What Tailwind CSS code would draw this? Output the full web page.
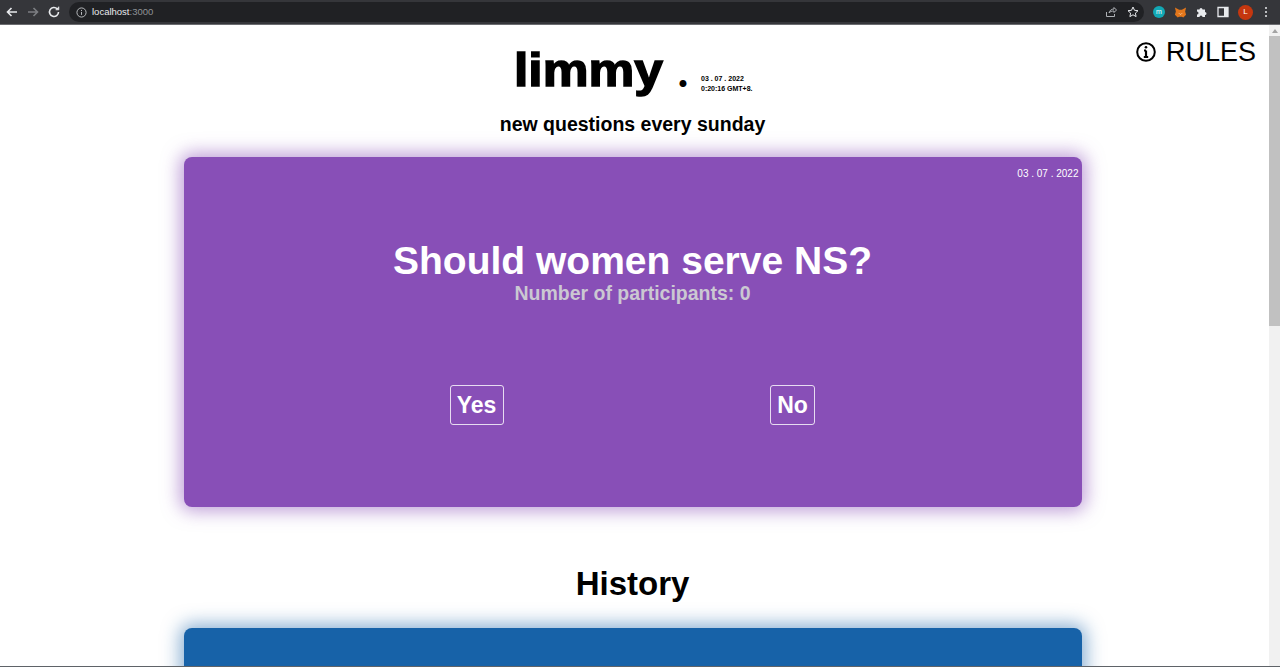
<!DOCTYPE html>
<html lang="en">
<head>
    <meta charset="UTF-8">
    <meta name="viewport" content="width=device-width, initial-scale=1.0">
    <title>limmy</title>
    <script src="https://cdn.jsdelivr.net/npm/@tailwindcss/browser@4"></script>
</head>
<body class="h-[667px] overflow-hidden bg-white font-['Liberation_Sans',Arial,sans-serif] text-black">

    <!-- browser toolbar -->
    <div class="flex h-[25px] items-center border-b border-[#6b6c70] bg-[#35363a] pl-[5px] pr-[13px]">
        <svg class="h-[14px] w-[14px]" viewBox="0 0 14 14" fill="none" stroke="#e8eaed" stroke-width="1.6"><path d="M12 7H2.5M6.5 3 2.5 7l4 4"/></svg>
        <svg class="ml-[7px] h-[14px] w-[14px]" viewBox="0 0 14 14" fill="none" stroke="#7c7e82" stroke-width="1.6"><path d="M2 7h9.5M7.5 3l4 4-4 4"/></svg>
        <svg class="ml-[7px] h-[14px] w-[14px]" viewBox="0 0 14 14" fill="none" stroke="#e8eaed" stroke-width="1.6"><path d="M11.5 7a4.5 4.5 0 1 1-1.3-3.2"/><path d="M11.8 1.6v3.2H8.6" fill="#e8eaed" stroke-width="0.8"/></svg>
        <div class="ml-[8px] flex h-[20px] flex-1 items-center rounded-full bg-[#202124] pl-[7px] pr-[5px]">
            <svg class="h-[11px] w-[11px]" viewBox="0 0 12 12" fill="none" stroke="#c4c7c9" stroke-width="1"><circle cx="6" cy="6" r="5"/><path d="M6 5.4v3.2M6 3.2v1.2"/></svg>
            <span class="ml-[5px] text-[9.5px] text-[#e8eaed]">localhost<span class="text-[#8f9296]">:3000</span></span>
            <svg class="ml-auto h-[12px] w-[12px]" viewBox="0 0 12 12" fill="none" stroke="#aeb1b5" stroke-width="1"><path d="M1.5 6v4.5h8V8M4 7c.5-2.500 2.500-4 5-4V1.500L11.500 4 9 6.500V5C7 5 5 5.500 4 7Z"/></svg>
            <svg class="ml-[10px] h-[12px] w-[12px]" viewBox="0 0 12 12" fill="none" stroke="#e8eaed" stroke-width="1"><path d="m6 1 1.500 3.300 3.500.4-2.600 2.400.7 3.500L6 8.800l-3.100 1.800.7-3.500L1 4.700l3.500-.4Z"/></svg>
        </div>
        <div class="ml-[9px] flex h-[12px] w-[12px] items-center justify-center rounded-full bg-[#12a8b5] text-[7px] text-white">m</div>
        <svg class="ml-[9px] h-[13px] w-[13px]" viewBox="0 0 14 14"><path d="M1 1.500 5.500 4h3L13 1.500 12 6l1 3.500-3 3-1.500-1h-3L4 12.500l-3-3L2 6Z" fill="#e2761b"/><path d="M5 7.500 6.500 9h1L9 7.500" fill="none" stroke="#f6c9a0" stroke-width="0.8"/></svg>
        <svg class="ml-[9px] h-[12px] w-[12px]" viewBox="0 0 12 12"><path d="M1 3.500h2.500a1.500 1.500 0 0 1 3 0H9V6a1.500 1.500 0 0 1 0 3v2H6.500a1.500 1.500 0 0 0-3 0H1V8.500a1.500 1.500 0 0 0 0-3Z" fill="#e8eaed"/></svg>
        <svg class="ml-[9px] h-[12px] w-[12px]" viewBox="0 0 12 12"><path d="M1 1.500h10v9H1Z" fill="none" stroke="#e8eaed" stroke-width="1.300"/><path d="M7 1.500h4v9H7Z" fill="#e8eaed"/></svg>
        <div class="ml-[9px] flex h-[15px] w-[15px] items-center justify-center rounded-full bg-[#c5370f] text-[8px] text-white">L</div>
        <div class="ml-[12px] flex flex-col gap-[2px]">
            <span class="h-[2px] w-[2px] rounded-full bg-[#e8eaed]"></span>
            <span class="h-[2px] w-[2px] rounded-full bg-[#e8eaed]"></span>
            <span class="h-[2px] w-[2px] rounded-full bg-[#e8eaed]"></span>
        </div>
    </div>

    <div class="flex h-[641px]">
        <!-- page -->
        <div class="relative w-[1269px] overflow-hidden pr-[4px]">
            <button class="absolute right-[13px] top-[11px] flex items-center gap-[10px] text-[27px] leading-[32px]">
                <svg class="h-[20px] w-[20px]" viewBox="0 0 20 20" fill="none" stroke="#000" stroke-width="2"><circle cx="10" cy="10" r="8.800"/><path d="M10 8.500v6.500M7.800 15h4.400M8 8.500h2" stroke-width="2.200"/><circle cx="10" cy="5.300" r="1.300" fill="#000" stroke="none"/></svg>
                RULES
            </button>

            <header class="flex flex-col items-center pt-[15px]">
                <div class="flex items-end pl-[11.5px]">
                    <h1 class="w-[154px] origin-left scale-x-[1.12] text-[46px] font-bold leading-[60px] [-webkit-text-stroke:1.5px_#000]">limmy</h1>
                    <span class="ml-[9px] w-[13px] text-center font-['Lato',sans-serif] text-[46px] font-bold leading-[60px]">.</span>
                    <div class="mb-[6px] ml-[11.5px] w-[62px] text-[7px] font-bold leading-[10px]">
                        <p>03 . 07 . 2022</p>
                        <p>0:20:16 GMT+8.</p>
                    </div>
                </div>
                <h2 class="mt-[12px] text-[19.5px] font-bold leading-[24px]">new questions every sunday</h2>
            </header>

            <section class="relative mx-auto mt-[21px] flex h-[350px] w-[898px] flex-col items-center rounded-lg bg-[#884fb7] text-white shadow-[0_0_18px_4px_rgba(136,79,183,0.55)]">
                <span class="absolute right-[3px] top-[10px] text-[10px] leading-[13px]">03 . 07 . 2022</span>
                <h3 class="mt-[84px] text-[39px] font-bold leading-[40px]">Should women serve NS?</h3>
                <p class="text-[19.5px] font-bold leading-[24px] text-[#cbc8d2]">Number of participants: 0</p>
                <div class="mt-[80px] grid w-full grid-cols-2">
                    <div class="flex justify-center pl-[137px]">
                        <button class="h-[40px] w-[54px] rounded-[3px] border border-white/80 text-[23px] font-bold">Yes</button>
                    </div>
                    <div class="flex justify-center pr-[129px]">
                        <button class="h-[40px] w-[45px] rounded-[3px] border border-white/80 text-[23px] font-bold">No</button>
                    </div>
                </div>
            </section>

            <h2 class="mt-[57px] text-center text-[33px] font-bold leading-[40px]">History</h2>

            <section class="mx-auto mt-[24px] h-[200px] w-[898px] rounded-lg bg-[#1762a8] shadow-[0_0_18px_4px_rgba(23,98,168,0.5)]"></section>
        </div>

        <!-- scrollbar -->
        <div class="flex w-[11px] flex-col bg-[#f1f1f1]">
            <div class="flex h-[11px] items-center justify-center">
                <span class="h-0 w-0 border-x-[3px] border-b-[4px] border-x-transparent border-b-[#a3a3a3]"></span>
            </div>
            <div class="h-[290px] bg-[#c1c1c1]"></div>
        </div>
    </div>
    <div class="h-px bg-[#5f6368]"></div>

</body>
</html>
